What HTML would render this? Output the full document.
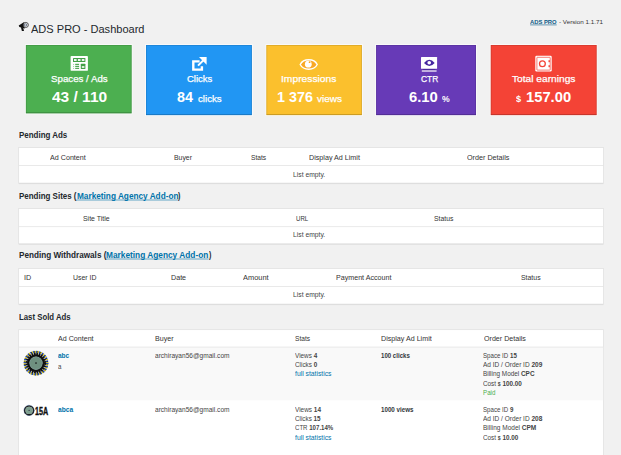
<!DOCTYPE html>
<html><head><meta charset="utf-8"><title>ADS PRO - Dashboard</title>
<style>
html,body{margin:0;padding:0;}
body{width:621px;height:455px;overflow:hidden;background:#f1f1f1;position:relative;font-family:"Liberation Sans",sans-serif;}
.t{position:absolute;white-space:nowrap;line-height:1em;transform-origin:0 50%;display:block;}
.t small{font-size:80%;}
svg{position:absolute;overflow:visible;}
</style></head><body>

<svg width="621" height="455" viewBox="0 0 621 455" style="left:0;top:0">
<!-- stat boxes -->
<rect x="25.9" y="45" width="105.7" height="68.3" fill="#4caf50" stroke="#fff" stroke-opacity="0.55" stroke-width="2"/>
<rect x="25.9" y="45" width="105.7" height="68.3" fill="#4caf50"/>
<rect x="26.3" y="45.4" width="104.9" height="67.5" fill="none" stroke="#000" stroke-opacity="0.13" stroke-width="0.8"/>
<path d="M25.9 112.7 H131.6" stroke="#000" stroke-opacity="0.1" stroke-width="1.2"/>
<rect x="146" y="45" width="105.9" height="70.1" fill="#2196f3" stroke="#fff" stroke-opacity="0.55" stroke-width="2"/>
<rect x="146" y="45" width="105.9" height="70.1" fill="#2196f3"/>
<rect x="146.4" y="45.4" width="105.1" height="69.3" fill="none" stroke="#000" stroke-opacity="0.13" stroke-width="0.8"/>
<path d="M146 114.5 H251.9" stroke="#000" stroke-opacity="0.1" stroke-width="1.2"/>
<rect x="266.4" y="45" width="95.5" height="70.1" fill="#fbc02d" stroke="#fff" stroke-opacity="0.55" stroke-width="2"/>
<rect x="266.4" y="45" width="95.5" height="70.1" fill="#fbc02d"/>
<rect x="266.8" y="45.4" width="94.7" height="69.3" fill="none" stroke="#000" stroke-opacity="0.13" stroke-width="0.8"/>
<path d="M266.4 114.5 H361.9" stroke="#000" stroke-opacity="0.1" stroke-width="1.2"/>
<rect x="376.1" y="45" width="99.9" height="70.1" fill="#673ab7" stroke="#fff" stroke-opacity="0.55" stroke-width="2"/>
<rect x="376.1" y="45" width="99.9" height="70.1" fill="#673ab7"/>
<rect x="376.5" y="45.4" width="99.1" height="69.3" fill="none" stroke="#000" stroke-opacity="0.13" stroke-width="0.8"/>
<path d="M376.1 114.5 H476" stroke="#000" stroke-opacity="0.1" stroke-width="1.2"/>
<rect x="490.8" y="45" width="105.8" height="70.1" fill="#f44336" stroke="#fff" stroke-opacity="0.55" stroke-width="2"/>
<rect x="490.8" y="45" width="105.8" height="70.1" fill="#f44336"/>
<rect x="491.2" y="45.4" width="105.0" height="69.3" fill="none" stroke="#000" stroke-opacity="0.13" stroke-width="0.8"/>
<path d="M490.8 114.5 H596.6" stroke="#000" stroke-opacity="0.1" stroke-width="1.2"/>
<!-- tables -->
<g stroke="#dedede" stroke-width="0.7" fill="#fff">
<rect x="18.7" y="147.6" width="584.8" height="35.5"/>
<rect x="18.7" y="208.6" width="584.8" height="35.2"/>
<rect x="18.7" y="268.5" width="584.8" height="35.6"/>
<rect x="18.7" y="329.7" width="584.8" height="140"/>
</g>
<rect x="19.05" y="347.1" width="584.1" height="53.3" fill="#f9f9f9"/>
<g stroke="#e3e3e3" stroke-width="0.8">
<path d="M19 165.5 H603.2 M19 226.6 H603.2 M19 286.5 H603.2 M19 347.1 H603.2"/>
</g>
<g stroke="#000" stroke-opacity="0.07" stroke-width="0.8">
<path d="M18.7 183.7 H603.5 M18.7 244.4 H603.5 M18.7 304.7 H603.5"/>
</g>
<!-- link underlines -->
<g stroke-width="0.6" fill="none">
<path d="M530.1 24.9 H556.7" stroke="#0a5a86"/>
<path d="M76.5 200 H178 M106.3 259 H208.6" stroke="#0073aa"/>
</g>
<!-- megaphone -->
<g>
<path d="M18.7 25.6 L24.2 21.9 L25 28.4 L19.4 27.1 Z" fill="#111"/>
<path d="M20.8 27 L23.2 27.4 L24 30.9 L21.9 30.9 Z" fill="#111"/>
<circle cx="25.8" cy="24.95" r="2.55" fill="#f1f1f1" stroke="#222" stroke-width="0.75"/>
<circle cx="25.6" cy="24.95" r="1.15" fill="none" stroke="#2a3a55" stroke-width="0.65"/>
</g>
<!-- spaces icon -->
<g>
<rect x="70.6" y="55.9" width="17.3" height="14.9" rx="0.9" fill="#fff"/>
<rect x="73" y="57.9" width="12.4" height="4.2" rx="0.6" fill="#43a047"/>
<rect x="74" y="59.1" width="2.6" height="1.8" fill="#fff"/>
<rect x="77.9" y="59.1" width="2.6" height="1.8" fill="#fff"/>
<rect x="81.8" y="59.1" width="2.6" height="1.8" fill="#fff"/>
<rect x="75.2" y="63.8" width="3.9" height="1.1" fill="#43a047"/>
<rect x="75.2" y="65.8" width="3.9" height="1.1" fill="#43a047"/>
<rect x="75.2" y="67.8" width="3.9" height="1.1" fill="#43a047"/>
<rect x="73.2" y="63.9" width="0.9" height="0.9" fill="#7cc47f"/>
<rect x="73.2" y="65.9" width="0.9" height="0.9" fill="#7cc47f"/>
<rect x="73.2" y="67.9" width="0.9" height="0.9" fill="#7cc47f"/>
<rect x="80.8" y="63.7" width="4.6" height="5.3" rx="0.5" fill="#43a047"/>
<rect x="81.8" y="66.2" width="2.6" height="1.6" fill="#fff"/>
</g>
<!-- external link -->
<g fill="none" stroke="#fff">
<path d="M199.6 61.4 H193.3 V69.6 H201.9 V66.2" stroke-width="2.4"/>
<path d="M198 65.6 L204.4 59.2" stroke-width="2"/>
<path d="M199 57.1 H206.6 V64.7 Z" fill="#fff" stroke="none"/>
</g>
<!-- eye -->
<g>
<path d="M300.2 64.5 C303.5 58.2 314 58.2 317.2 64.5 C314 70.8 303.5 70.8 300.2 64.5 Z" fill="#f9a825" stroke="#fff" stroke-width="1.4"/>
<circle cx="308.3" cy="64.2" r="3.4" fill="#fff"/>
<circle cx="309.6" cy="62.2" r="0.9" fill="#f9a825"/>
</g>
<!-- monitor eye -->
<g>
<rect x="421" y="57" width="16.1" height="11.7" rx="0.5" fill="#fff"/>
<path d="M424 62.9 Q429.3 56.6 434.7 62.9 Q429.3 69 424 62.9 Z" fill="#4527a0"/>
<circle cx="429.2" cy="62.8" r="1.8" fill="#fff"/>
<path d="M423.5 68.9 H434.7 L436.6 70.6 H421.8 Z" fill="#4a2a9a"/>
<rect x="421.8" y="70.4" width="14.8" height="1.2" fill="#fff"/>
</g>
<!-- safe -->
<g>
<rect x="535.3" y="55.8" width="16.4" height="15.8" rx="1.3" fill="#fff"/>
<rect x="536.9" y="57.3" width="13.3" height="12.8" rx="0.4" fill="none" stroke="#f44336" stroke-width="0.7"/>
<circle cx="542.4" cy="63.7" r="2.9" fill="none" stroke="#f44336" stroke-width="1.3"/>
<rect x="548.5" y="60.2" width="1.4" height="2" fill="#f44336"/>
<rect x="548.5" y="65.2" width="1.4" height="2" fill="#f44336"/>
</g>
<!-- thumb 1 -->
<g fill="none">
<circle cx="36" cy="363.1" r="7.6" stroke="#111" stroke-width="2.6"/>
<circle cx="36" cy="363.1" r="10" stroke="#111" stroke-width="4.4" stroke-dasharray="2.0 0.618"/>
<circle cx="36" cy="363.1" r="11.3" stroke="#1a4fd0" stroke-width="2.2" stroke-dasharray="0.9 2.058"/>
<circle cx="36" cy="363.1" r="11.3" stroke="#f0dc1e" stroke-width="2.2" stroke-dasharray="0.9 2.058" stroke-dashoffset="-1.36"/>
<circle cx="36" cy="363.1" r="6.6" fill="#6f9080"/>
<circle cx="36" cy="363.1" r="6.2" stroke="#9fc0d8" stroke-width="0.5" stroke-dasharray="0.5 0.6" opacity="0.8"/>
<circle cx="36" cy="363.1" r="0.8" fill="#111"/>
</g>
<!-- thumb 2 -->
<g>
<circle cx="29.1" cy="410.4" r="4.4" fill="none" stroke="#1c1c1c" stroke-width="1.7"/>
<circle cx="29.1" cy="410.4" r="5.1" fill="none" stroke="#2f5f9f" stroke-width="0.7" stroke-dasharray="0.6 0.735"/>
<circle cx="29.1" cy="410.4" r="3.7" fill="#7fa090"/>
<circle cx="29.1" cy="410.4" r="0.55" fill="#223"/>
</g>
</svg>
<span class="t" style="left:31.1px;top:24px;font-size:11.2px;font-weight:400;color:#23282d;transform:scaleX(0.9867);">ADS PRO - Dashboard</span>
<span class="t" style="left:530.1px;top:20px;font-size:5.9px;font-weight:700;color:#0a5a86;transform:scaleX(0.9909);">ADS PRO</span>
<span class="t" style="left:559.4px;top:20px;font-size:5.9px;font-weight:400;color:#333;transform:scaleX(1.0638);">- Version 1.1.71</span>
<span class="t" style="left:50.7px;top:74px;font-size:9.8px;font-weight:400;color:#ffffff;transform:scaleX(0.9915);-webkit-text-stroke:0.25px #fff;">Spaces / Ads</span>
<span class="t" style="left:51.5px;top:89px;font-size:15px;font-weight:700;color:#ffffff;transform:scaleX(1.0320);">43 / 110</span>
<span class="t" style="left:186.7px;top:74px;font-size:9.8px;font-weight:400;color:#ffffff;transform:scaleX(0.9684);-webkit-text-stroke:0.25px #fff;">Clicks</span>
<span class="t" style="left:177.4px;top:89px;font-size:15px;font-weight:700;color:#ffffff;transform:scaleX(0.9588);">84</span>
<span class="t" style="left:197.8px;top:94px;font-size:9.8px;font-weight:400;color:#ffffff;transform:scaleX(0.9894);-webkit-text-stroke:0.25px #fff;">clicks</span>
<span class="t" style="left:280.9px;top:74px;font-size:9.8px;font-weight:400;color:#ffffff;transform:scaleX(1.0490);-webkit-text-stroke:0.25px #fff;">Impressions</span>
<span class="t" style="left:276.5px;top:89px;font-size:15px;font-weight:700;color:#ffffff;transform:scaleX(0.9561);">1 376</span>
<span class="t" style="left:316.5px;top:94px;font-size:9.8px;font-weight:400;color:#ffffff;transform:scaleX(1.0204);-webkit-text-stroke:0.25px #fff;">views</span>
<span class="t" style="left:420.8px;top:74px;font-size:9.8px;font-weight:400;color:#ffffff;transform:scaleX(0.8590);-webkit-text-stroke:0.25px #fff;">CTR</span>
<span class="t" style="left:408.5px;top:89px;font-size:15px;font-weight:700;color:#ffffff;transform:scaleX(0.9862);">6.10</span>
<span class="t" style="left:442px;top:95px;font-size:9px;font-weight:700;color:#ffffff;transform:scaleX(0.9606);">%</span>
<span class="t" style="left:511.8px;top:74px;font-size:9.8px;font-weight:400;color:#ffffff;transform:scaleX(1.0393);-webkit-text-stroke:0.25px #fff;">Total earnings</span>
<span class="t" style="left:516.2px;top:95px;font-size:9px;font-weight:700;color:#ffffff;transform:scaleX(1.0168);">$</span>
<span class="t" style="left:526.2px;top:89px;font-size:15px;font-weight:700;color:#ffffff;transform:scaleX(0.9828);">157.00</span>
<span class="t" style="left:18.7px;top:131px;font-size:8.4px;font-weight:700;color:#23282d;transform:scaleX(0.9494);">Pending Ads</span>
<span class="t" style="left:18.7px;top:192px;font-size:8.4px;font-weight:700;color:#23282d;transform:scaleX(0.9504);">Pending Sites (</span>
<span class="t" style="left:76.5px;top:192px;font-size:8.4px;font-weight:700;color:#0073aa;transform:scaleX(0.9841);">Marketing Agency Add-on</span>
<span class="t" style="left:178px;top:192px;font-size:8.4px;font-weight:700;color:#23282d;transform:scaleX(0.8581);">)</span>
<span class="t" style="left:18.7px;top:251px;font-size:8.4px;font-weight:700;color:#23282d;transform:scaleX(0.9740);">Pending Withdrawals (</span>
<span class="t" style="left:106.3px;top:251px;font-size:8.4px;font-weight:700;color:#0073aa;transform:scaleX(0.9918);">Marketing Agency Add-on</span>
<span class="t" style="left:208.7px;top:251px;font-size:8.4px;font-weight:700;color:#23282d;transform:scaleX(0.8581);">)</span>
<span class="t" style="left:18.7px;top:313px;font-size:8.4px;font-weight:700;color:#23282d;transform:scaleX(0.9310);">Last Sold Ads</span>
<span class="t" style="left:50px;top:154px;font-size:7.0px;font-weight:400;color:#333;transform:scaleX(1.0219);">Ad Content</span>
<span class="t" style="left:173.7px;top:154px;font-size:7.0px;font-weight:400;color:#333;transform:scaleX(0.9838);">Buyer</span>
<span class="t" style="left:250.8px;top:154px;font-size:7.0px;font-weight:400;color:#333;transform:scaleX(0.9528);">Stats</span>
<span class="t" style="left:309px;top:154px;font-size:7.0px;font-weight:400;color:#333;transform:scaleX(1.0222);">Display Ad Limit</span>
<span class="t" style="left:466.8px;top:154px;font-size:7.0px;font-weight:400;color:#333;transform:scaleX(1.0283);">Order Details</span>
<span class="t" style="left:82.6px;top:215px;font-size:7.0px;font-weight:400;color:#333;transform:scaleX(0.9903);">Site Title</span>
<span class="t" style="left:295.8px;top:215px;font-size:7.0px;font-weight:400;color:#333;transform:scaleX(0.8705);">URL</span>
<span class="t" style="left:433.8px;top:215px;font-size:7.0px;font-weight:400;color:#333;transform:scaleX(0.9769);">Status</span>
<span class="t" style="left:23.7px;top:274px;font-size:7.0px;font-weight:400;color:#333;transform:scaleX(1.0286);">ID</span>
<span class="t" style="left:73.4px;top:274px;font-size:7.0px;font-weight:400;color:#333;transform:scaleX(0.9859);">User ID</span>
<span class="t" style="left:170.8px;top:274px;font-size:7.0px;font-weight:400;color:#333;transform:scaleX(1.0205);">Date</span>
<span class="t" style="left:243.1px;top:274px;font-size:7.0px;font-weight:400;color:#333;transform:scaleX(1.0611);">Amount</span>
<span class="t" style="left:335.6px;top:274px;font-size:7.0px;font-weight:400;color:#333;transform:scaleX(1.0168);">Payment Account</span>
<span class="t" style="left:521.4px;top:274px;font-size:7.0px;font-weight:400;color:#333;transform:scaleX(0.9869);">Status</span>
<span class="t" style="left:57.8px;top:335px;font-size:7.0px;font-weight:400;color:#333;transform:scaleX(1.0162);">Ad Content</span>
<span class="t" style="left:154.7px;top:335px;font-size:7.0px;font-weight:400;color:#333;transform:scaleX(1.0111);">Buyer</span>
<span class="t" style="left:294.9px;top:335px;font-size:7.0px;font-weight:400;color:#333;transform:scaleX(0.9465);">Stats</span>
<span class="t" style="left:380.7px;top:335px;font-size:7.0px;font-weight:400;color:#333;transform:scaleX(1.0181);">Display Ad Limit</span>
<span class="t" style="left:483.7px;top:335px;font-size:7.0px;font-weight:400;color:#333;transform:scaleX(1.0161);">Order Details</span>
<span class="t" style="left:292.6px;top:172px;font-size:6.5px;font-weight:400;color:#444;transform:scaleX(1.0403);">List empty.</span>
<span class="t" style="left:292.6px;top:232px;font-size:6.5px;font-weight:400;color:#444;transform:scaleX(1.0403);">List empty.</span>
<span class="t" style="left:292.6px;top:292px;font-size:6.5px;font-weight:400;color:#444;transform:scaleX(1.0403);">List empty.</span>
<span class="t" style="left:34.8px;top:407px;font-size:10px;font-weight:700;color:#111;transform:scaleX(0.7190);-webkit-text-stroke:0.35px #111;">15A</span>
<span class="t" style="left:57.8px;top:352px;font-size:7.0px;font-weight:700;color:#0073aa;transform:scaleX(0.9285);">abc</span>
<span class="t" style="left:57.8px;top:364px;font-size:6.5px;font-weight:400;color:#444;transform:scaleX(0.9379);">a</span>
<span class="t" style="left:57.8px;top:406px;font-size:7.0px;font-weight:700;color:#0073aa;transform:scaleX(0.9519);">abca</span>
<span class="t" style="left:154.7px;top:353px;font-size:6.5px;font-weight:400;color:#444;transform:scaleX(1.0095);">archirayan56@gmail.com</span>
<span class="t" style="left:154.7px;top:407px;font-size:6.5px;font-weight:400;color:#444;transform:scaleX(1.0095);">archirayan56@gmail.com</span>
<span class="t" style="left:294.7px;top:353px;font-size:6.5px;font-weight:400;color:#444;transform:scaleX(0.9799);">Views <b>4</b></span>
<span class="t" style="left:294.7px;top:362px;font-size:6.5px;font-weight:400;color:#444;transform:scaleX(0.9752);">Clicks <b>0</b></span>
<span class="t" style="left:294.7px;top:371px;font-size:6.5px;font-weight:400;color:#0073aa;transform:scaleX(1.0415);">full statistics</span>
<span class="t" style="left:294.7px;top:407px;font-size:6.5px;font-weight:400;color:#444;transform:scaleX(0.9899);">Views <b>14</b></span>
<span class="t" style="left:294.7px;top:416px;font-size:6.5px;font-weight:400;color:#444;transform:scaleX(0.9706);">Clicks <b>15</b></span>
<span class="t" style="left:294.7px;top:425px;font-size:6.5px;font-weight:400;color:#444;transform:scaleX(0.9377);">CTR <b>107.14%</b></span>
<span class="t" style="left:294.7px;top:435px;font-size:6.5px;font-weight:400;color:#0073aa;transform:scaleX(1.0415);">full statistics</span>
<span class="t" style="left:381px;top:353px;font-size:6.5px;font-weight:700;color:#32373c;transform:scaleX(0.9371);">100 clicks</span>
<span class="t" style="left:381px;top:407px;font-size:6.5px;font-weight:700;color:#32373c;transform:scaleX(0.9563);">1000 views</span>
<span class="t" style="left:483.3px;top:353px;font-size:6.5px;font-weight:400;color:#444;transform:scaleX(0.9446);">Space ID <b>15</b></span>
<span class="t" style="left:483.3px;top:362px;font-size:6.5px;font-weight:400;color:#444;transform:scaleX(1.0006);">Ad ID / Order ID <b>209</b></span>
<span class="t" style="left:483.3px;top:371px;font-size:6.5px;font-weight:400;color:#444;transform:scaleX(0.9827);">Billing Model <b>CPC</b></span>
<span class="t" style="left:483.3px;top:381px;font-size:6.5px;font-weight:400;color:#444;transform:scaleX(0.9761);">Cost <b><small>$</small> 100.00</b></span>
<span class="t" style="left:483.3px;top:390px;font-size:6.5px;font-weight:400;color:#4caf50;transform:scaleX(0.9527);">Paid</span>
<span class="t" style="left:483.3px;top:407px;font-size:6.5px;font-weight:400;color:#444;transform:scaleX(0.9418);">Space ID <b>9</b></span>
<span class="t" style="left:483.3px;top:416px;font-size:6.5px;font-weight:400;color:#444;transform:scaleX(1.0006);">Ad ID / Order ID <b>208</b></span>
<span class="t" style="left:483.3px;top:425px;font-size:6.5px;font-weight:400;color:#444;transform:scaleX(1.0033);">Billing Model <b>CPM</b></span>
<span class="t" style="left:483.3px;top:435px;font-size:6.5px;font-weight:400;color:#444;transform:scaleX(0.9767);">Cost <b><small>$</small> 10.00</b></span>
</body></html>
